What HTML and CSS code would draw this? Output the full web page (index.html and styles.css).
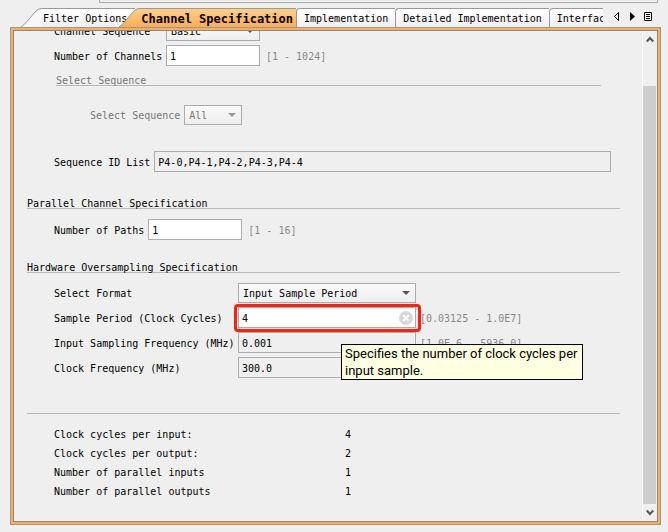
FILE: index.html
```html
<!DOCTYPE html>
<html lang="en">
<head>
<meta charset="utf-8">
<title>Channel Specification</title>
<link rel="stylesheet" href="styles.css">
</head>
<body>
<div class="upper-pane"></div>
<header class="tab-bar">
  <div class="tabs" role="tablist">
    <button class="tab slanted" role="tab">
      <svg class="slant" viewBox="0 0 20 19" aria-hidden="true"><path class="slant-fill" d="M0 19Q3 17 6 13.500L14 4Q17 .5 20 .5V19Z"/><path class="slant-line" d="M0 19Q3 17 6 13.500L14 4Q17 .5 20 .5"/></svg><span class="face">Filter Options</span>
    </button>
    <button class="tab slanted active" role="tab" aria-selected="true">
      <svg class="slant" viewBox="0 0 20 19" aria-hidden="true"><defs><linearGradient id="warm" x1="0" y1="0" x2="0" y2="1"><stop offset="0" stop-color="#ffd08a"/><stop offset="1" stop-color="#ffad55"/></linearGradient></defs><path fill="url(#warm)" d="M0 19Q3 17 6 13.500L14 4Q17 .5 20 .5V19Z"/><path class="slant-line" d="M0 19Q3 17 6 13.500L14 4Q17 .5 20 .5"/></svg><span class="face">Channel Specification</span>
    </button>
    <button class="tab" role="tab">Implementation</button>
    <button class="tab" role="tab">Detailed Implementation</button>
    <button class="tab" role="tab">Interface</button>
  </div>
  <nav class="tab-nav">
    <button aria-label="Previous tab"><svg width="10" height="11" viewBox="0 0 10 11"><path d="M7.500 1.500v8L3.500 5.500z" fill="none" stroke="#000"/></svg></button>
    <button aria-label="Next tab"><svg width="10" height="11" viewBox="0 0 10 11"><path d="M3 1v9L8 5.500z" fill="#000"/></svg></button>
    <button aria-label="List tabs"><svg width="10" height="11" viewBox="0 0 10 11"><path d="M1.500 1.500h7v8h-7zM3 3.500h4M3 5.500h4M3 7.500h4" fill="none" stroke="#000"/></svg></button>
  </nav>
</header>
<main class="panel">
  <div class="viewport">
    <form class="content">
      <div class="row">
        <label class="channel-label" for="chseq">Channel Sequence</label>
        <span class="pick short"><select id="chseq"><option>Basic</option></select><svg viewBox="0 0 8 4"><path d="M0 0h8L4 4z"/></svg></span>
      </div>
      <div class="row">
        <label class="channel-label" for="chnum">Number of Channels</label>
        <input class="short" id="chnum" value="1">
        <span class="hint">[1 - 1024]</span>
      </div>
      <h2 class="sub">Select Sequence</h2>
      <div class="row nested">
        <label for="selseq">Select Sequence</label>
        <span class="pick tiny"><select id="selseq" disabled><option>All</option></select><svg viewBox="0 0 8 4"><path d="M0 0h8L4 4z"/></svg></span>
      </div>
      <div class="row ids">
        <label for="ids">Sequence ID List</label>
        <input id="ids" value="P4-0,P4-1,P4-2,P4-3,P4-4" readonly>
      </div>
      <h2 class="parallel">Parallel Channel Specification</h2>
      <div class="row first">
        <label for="paths">Number of Paths</label>
        <input class="short" id="paths" value="1">
        <span class="hint">[1 - 16]</span>
      </div>
      <h2>Hardware Oversampling Specification</h2>
      <div class="row first wide">
        <label for="format">Select Format</label>
        <span class="pick"><select id="format"><option>Input Sample Period</option></select><svg viewBox="0 0 8 4"><path d="M0 0h8L4 4z"/></svg></span>
      </div>
      <div class="row wide">
        <label for="period">Sample Period (Clock Cycles)</label>
        <span class="marked">
          <input id="period" value="4" aria-describedby="tip">
          <button class="clear" type="button" aria-label="Clear"><svg viewBox="0 0 14 14"><circle cx="7" cy="7" r="7" fill="#d8d8d8"/><path d="M4.200 4.200l5.600 5.600M9.800 4.200L4.200 9.800" stroke="#fff" stroke-width="1.800"/></svg></button>
        </span>
        <span class="hint">[0.03125 - 1.0E7]</span>
      </div>
      <div class="row wide">
        <label for="freq">Input Sampling Frequency (MHz)</label>
        <span class="anchor">
          <input id="freq" value="0.001" readonly>
          <span class="tooltip" id="tip" role="tooltip">Specifies the number of clock cycles per input sample.</span>
        </span>
        <span class="hint">[1.0E-6 - 5936.0]</span>
      </div>
      <div class="row wide">
        <label for="clock">Clock Frequency (MHz)</label>
        <input id="clock" value="300.0" readonly>
      </div>
      <hr>
      <dl class="summary">
        <dt>Clock cycles per input:</dt><dd>4</dd>
        <dt>Clock cycles per output:</dt><dd>2</dd>
        <dt>Number of parallel inputs</dt><dd>1</dd>
        <dt>Number of parallel outputs</dt><dd>1</dd>
      </dl>
    </form>
  </div>
  <div class="scrollbar">
    <button aria-label="Scroll up"><svg width="8" height="7" viewBox="0 0 8 7"><path d="M.8 5.500L4 2l3.200 3.500" fill="none" stroke="#555" stroke-width="2"/></svg></button>
    <div class="thumb"></div>
    <button aria-label="Scroll down"><svg width="8" height="7" viewBox="0 0 8 7"><path d="M.8 1.500L4 5l3.200-3.500" fill="none" stroke="#555" stroke-width="2"/></svg></button>
  </div>
</main>
</body>
</html>
```

FILE: styles.css
```css
* { box-sizing: border-box; }

body {
  margin: 0;
  height: 100vh;
  display: flex;
  flex-direction: column;
  overflow: hidden;
  background: #efefef;
  color: #000;
  font: 10px/12px "DejaVu Sans Mono", "Liberation Mono", monospace;
}

button, input, select { font: inherit; color: inherit; margin: 0; }
button { border: 0; padding: 0; background: none; }

.upper-pane {
  flex: none;
  height: 3px;
  margin: 0 10px 0 99px;
  border: 1px solid #acacb0;
  border-top: 0;
}

/* Tabs */
.tab-bar {
  flex: none;
  display: flex;
  height: 19px;
  margin-top: 5px;
  padding-left: 21px;
  padding-right: 15px;
}
.tabs { flex: 1; display: flex; overflow: hidden; }
.tab {
  flex: none;
  height: 19px;
  padding: 2px 7px 0;
  border: solid #999;
  border-width: 1px 0 0 1px;
  border-top-left-radius: 4px;
  background: linear-gradient(#fff, #efefef);
  white-space: nowrap;
}
.tab.slanted {
  display: flex;
  padding: 0;
  border: 0;
  background: none;
}
.slant { width: 20px; height: 19px; flex: none; }
.slant-fill { fill: #f8f8f8; }
.slant-line { fill: none; stroke: #999; }
.face {
  height: 19px;
  padding: 4px 8px 0 2px;
  border-top: 1px solid #999;
  background: linear-gradient(#fff, #efefef);
}
.tab.active {
  position: relative;
  margin-left: -16px;
  font-size: 12px;
  font-weight: bold;
}
.active .face { padding-right: 3px; background: linear-gradient(#ffd08a, #ffad55); }

.tab-nav { flex: none; display: flex; gap: 6px; padding: 3px 0 0 8px; }
.tab-nav button { width: 10px; height: 11px; }
.tab-nav svg { display: block; }

/* Panel frame */
.panel {
  flex: 1;
  min-height: 0;
  display: flex;
  margin: 0 7px 7px 10px;
  border: 1px solid #999;
  outline: 2px solid #ffad55;
  outline-offset: -3px;
  padding: 2px;
}
.viewport {
  flex: 1;
  min-width: 0;
  overflow: hidden;
  border: 1px solid #888;
  border-right: 0;
}
.content { margin-top: -10px; padding: 0 22px 0 13px; }

/* Form rows */
.row {
  display: flex;
  align-items: center;
  gap: 4px;
  margin: 4px 0 0 27px;
  white-space: nowrap;
}
.row:first-child { margin-top: 0; }
.row.first { margin-top: 10px; }
.row.nested { margin: 19px 0 0 63px; color: #777; }
.row.ids { margin-top: 26px; margin-right: 9px; }
.row.ids input { flex: 1; }
.row label, .hint { padding-top: 2px; }
.channel-label { width: 108px; }
.wide label { width: 180px; }

input {
  width: 178px;
  height: 21px;
  padding: 2px 3px 0;
  border: 1px solid #acacb0;
  border-radius: 0;
  background: #fff;
  outline: 0;
}
input[readonly] { background: #efefef; }
.short, input.short { width: 94px; }
.hint { color: #888; }
.short + .hint { margin-left: 2px; }

.pick { display: grid; align-items: center; width: 178px; height: 20px; }
.pick.short { width: 94px; }
.pick.tiny { width: 58px; }
.pick > * { grid-area: 1 / 1; }
.pick select {
  appearance: none;
  width: 100%;
  height: 20px;
  padding: 1px 4px 0;
  border: 1px solid #acacb0;
  border-radius: 0;
  background: linear-gradient(#fafafa, #eee);
  opacity: 1;
}
.pick svg { justify-self: end; width: 8px; height: 4px; margin-right: 6px; fill: #555; pointer-events: none; }
.tiny svg { fill: #999; }

h2 {
  margin: 22px 0 0;
  height: 11px;
  font-size: 10px;
  line-height: 12px;
  font-weight: normal;
  border-bottom: 1px solid #b8b8b8;
}
h2.sub { margin: 9px 19px 0 29px; color: #777; }
h2.parallel { margin-top: 26px; }

hr { margin: 35px 0 0; border: 0; border-top: 1px solid #b8b8b8; }

.summary {
  display: grid;
  grid-template-columns: 291px auto;
  line-height: 19px;
  margin: 11px 0 0 27px;
}
.summary dd { margin: 0; }

/* Highlighted field and its tooltip */
.marked, .anchor { position: relative; display: flex; }
.marked::after {
  content: "";
  position: absolute;
  inset: -3px -5px -4px -4px;
  border: 3px solid #ff2010;
  border-radius: 4px;
  pointer-events: none;
}
.clear { position: absolute; right: 3px; top: 4px; width: 14px; height: 14px; }
.clear svg { display: block; }
.tooltip {
  position: absolute;
  left: 103px;
  top: 12px;
  z-index: 1;
  width: 242px;
  padding: 0 0 0 3px;
  border: 1px solid #000;
  background: #ffffe1;
  font: 13px/17px Roboto, "Noto Sans", sans-serif;
  white-space: normal;
}

/* Scrollbar */
.scrollbar {
  flex: none;
  display: flex;
  flex-direction: column;
  width: 16px;
  border: solid #888;
  border-width: 1px 1px 1px 0;
  box-shadow: inset 1px 0 #fff;
  padding: 0 1px;
}
.scrollbar button { height: 17px; display: grid; place-items: center; }
.thumb { flex: 1; margin-top: 38px; background: #cdcdcd; }
```
